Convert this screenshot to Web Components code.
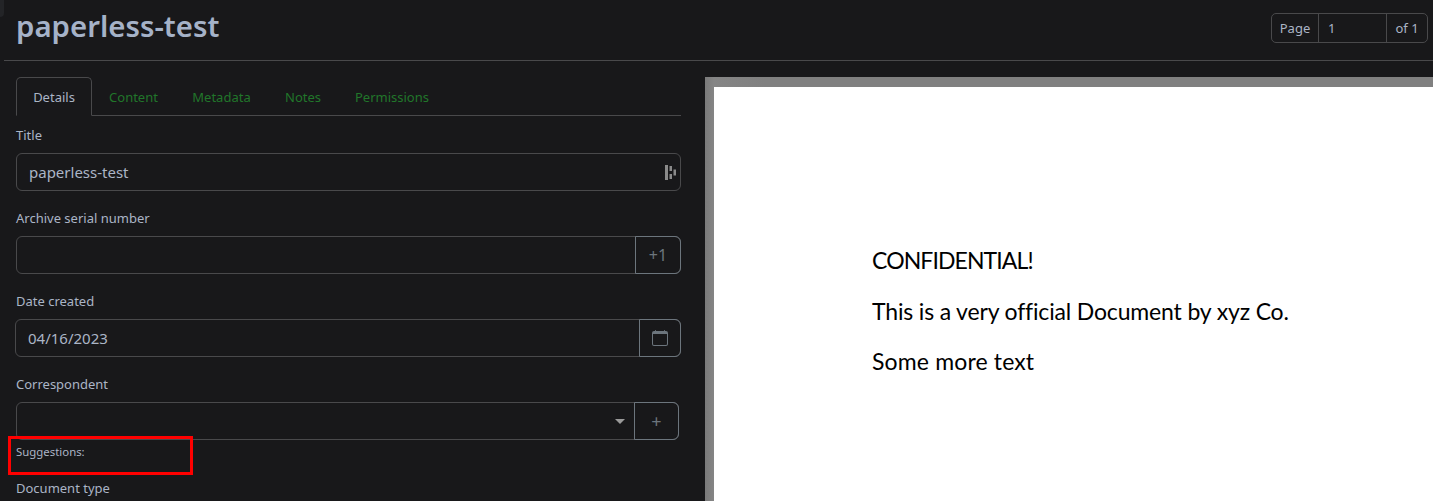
<!DOCTYPE html>
<html><head><meta charset="utf-8"><style>
html,body{margin:0;padding:0;height:501px;overflow:hidden;background:#18181a;}
body{font-family:"Noto Sans","Liberation Sans",sans-serif;color:#abb5c6;}
</style></head><body>
<pl-app></pl-app>
<script>
const def=(name,html,setup)=>customElements.define(name,class extends HTMLElement{
  connectedCallback(){ if(this.shadowRoot)return; const r=this.attachShadow({mode:'open'}); r.innerHTML=html(this); setup&&setup(r,this);}
});
const attr=(e,n,d='')=>e.getAttribute(n)??d;

def('pl-pager',()=>`<style>
:host{display:flex;height:30px;box-sizing:border-box;border:1px solid #49494b;border-radius:5px;font-size:13px;color:#abb5c6;width:157px;align-items:stretch}
span{display:flex;align-items:center}
.a{width:46px;box-sizing:border-box;justify-content:center;white-space:nowrap}
.b{flex:1;border-left:1px solid #49494b;border-right:1px solid #49494b;padding-left:9px}
.c{width:40px;box-sizing:border-box;justify-content:center;white-space:nowrap}
</style><span class="a">Page</span><span class="b">1</span><span class="c">of 1</span>`);

def('pl-header',()=>`<style>
:host{display:flex;align-items:center;justify-content:space-between;height:61px;box-sizing:border-box;margin-left:4px;padding:0 5px 0 12px;border-bottom:1px solid #49494b}
h1{margin:0 0 6px;font-size:29.4px;font-weight:600;line-height:1.2;color:#a5b2c8}
.p{margin-bottom:4px}
</style><h1>paperless-test</h1><div class="p"><slot></slot></div>`);

def('pl-tabs',()=>`<style>
:host{display:flex;height:39px;box-sizing:border-box;border-bottom:1px solid #49494b;font-size:13px;align-items:stretch}
span{display:flex;align-items:center;justify-content:center;color:#21762a;white-space:nowrap;margin-bottom:-1px;border:1px solid transparent;box-sizing:border-box}
.on{color:#abb5c6;background:#18181a;border-color:#49494b #49494b #18181a;border-radius:5px 5px 0 0;width:76px}
.c{width:83px}.m{width:93px}.n{width:70px}.p{width:108px}
</style><span class="on">Details</span><span class="c">Content</span><span class="m">Metadata</span><span class="n">Notes</span><span class="p">Permissions</span>`);

def('pl-field',(e)=>`<style>
:host{display:block;height:83px;font-size:13px}
label{display:block;height:37px;line-height:38px;color:#abb5c6;white-space:nowrap;padding-left:${attr(e,'inset','0')}px}
.box{display:flex;height:38px;box-sizing:border-box;border:1px solid #49494b;border-radius:6px;align-items:center}
.v{flex:1;padding-left:12px;font-size:15px;color:#abb5c6;white-space:nowrap}
</style><label>${attr(e,'label')}</label><div class="box"><span class="v">${attr(e,'value')}</span><slot></slot></div>`);

def('pl-end',(e)=>`<style>
:host{display:flex;align-self:stretch;align-items:center;justify-content:center;border:1px solid #6c757d;color:#6c757d;font-size:${attr(e,'fs','16')}px;width:${attr(e,'w','45')}px;box-sizing:border-box;margin:-1px -1px -1px 0;border-radius:0 6px 6px 0}
</style><slot></slot>`);

def('pl-viewer',()=>`<style>
:host{display:block;flex:1;height:424px;background:linear-gradient(90deg,#7a7a7a,#858585 9px,#808080 60px);padding:10px 0 0 9px;box-sizing:border-box;overflow:hidden}
.page{background:#fff;height:100%;padding:159px 0 0 158px;box-sizing:border-box;color:#000;font-family:Lato,"Liberation Sans",sans-serif;font-size:23px;line-height:28px}
p{margin:0 0 22.5px;white-space:nowrap}
.l1{letter-spacing:-.9px}.l2{letter-spacing:-.16px}.l3{letter-spacing:.15px}
</style><div class="page"><p class="l1">CONFIDENTIAL!</p><p class="l2">This is a very official Document by xyz Co.</p><p class="l3">Some more text</p></div>`);

def('pl-app',()=>`<style>
:host{display:block;position:relative;height:501px;overflow:hidden}
.tl{position:absolute;left:0;top:0;width:4px;height:17px;background:#232427;border-radius:0 0 4px 0}
.main{display:flex;padding-top:16px;gap:24px}
.left{width:665px;margin-left:16px;flex:none}
.sug{font-size:11.4px;color:#abb5c6;margin-top:-6px;height:20px;line-height:20px}
.date{margin-left:-1px}
.corr{width:663px}
.red{position:absolute;left:8px;top:436px;width:185px;height:39px;box-sizing:border-box;border:3px solid #f00;pointer-events:none}
.doc{margin-top:16px;font-size:13px;line-height:20px;height:20px;white-space:nowrap}
svg{display:block}
</style>
<div class="tl"></div>
<pl-header><pl-pager></pl-pager></pl-header>
<div class="main">
 <div class="left">
  <pl-tabs></pl-tabs>
  <pl-field label="Title" value="paperless-test"><svg width="12" height="15" viewBox="0 0 12 15" style="margin-right:3px"><path fill="#8a8a8a" d="M0 0h3v15H0zM4.500 1H7v5H4.500zM4.500 9H7v5H4.500zM8.500 4.500H11v6H8.500z"/></svg></pl-field>
  <pl-field label="Archive serial number"><pl-end w="46">+1</pl-end></pl-field>
  <pl-field class="date" inset="1" label="Date created" value="04/16/2023"><pl-end w="42"><svg width="16" height="16" viewBox="0 0 16 16" fill="#6c757d"><path d="M3.500 0a.5.5 0 0 1 .5.5V1h8V.5a.5.5 0 0 1 1 0V1h1a2 2 0 0 1 2 2v11a2 2 0 0 1-2 2H2a2 2 0 0 1-2-2V3a2 2 0 0 1 2-2h1V.5a.5.5 0 0 1 .5-.5zM1 4v10a1 1 0 0 0 1 1h12a1 1 0 0 0 1-1V4H1z"/></svg></pl-end></pl-field>
  <pl-field class="corr" label="Correspondent"><svg width="10" height="5" viewBox="0 0 10 5" style="margin-right:9px"><path fill="#9a9a9a" d="M0 0h10L5 5z"/></svg><pl-end w="45" fs="18">+</pl-end></pl-field>
  <div class="sug">Suggestions:</div>
  <div class="doc">Document type</div>
 </div>
 <pl-viewer></pl-viewer>
</div>
<div class="red"></div>`);
</script></body></html>
